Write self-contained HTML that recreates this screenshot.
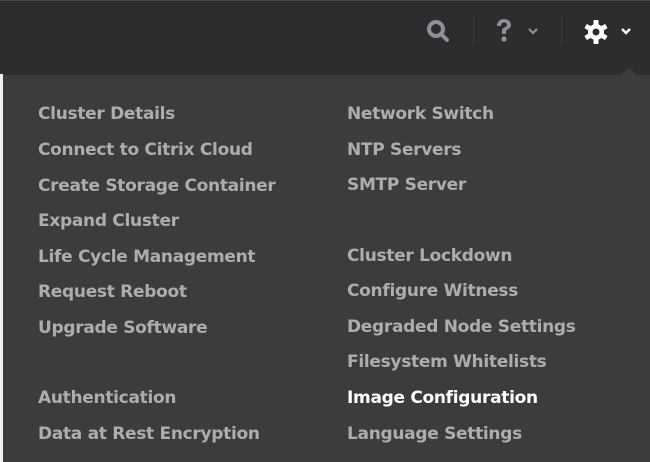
<!DOCTYPE html>
<html><head><style>
body{margin:0;width:650px;height:462px;overflow:hidden;background:#3c3c3f;font-family:"DejaVu Sans","Liberation Sans",sans-serif;position:relative}
.hdr{position:absolute;left:0;top:0;width:650px;height:74px;background:#2d2d30;border-top:1px solid #444}
.lstrip{position:absolute;left:0;top:74px;width:3px;height:388px;background:#f0f0f0}
.it{position:absolute;font-size:17px;font-weight:bold;color:#adadad;white-space:nowrap;letter-spacing:-0.3px;line-height:20px}
.sel{color:#fff}
.sep{position:absolute;top:15px;width:1px;height:29px;background:#3a3a3d}
</style></head><body>
<div class="hdr">
<svg style="position:absolute;left:426px;top:17px" width="26" height="26" viewBox="0 0 26 26"><circle cx="10" cy="11" r="7" fill="none" stroke="#8a9298" stroke-width="4"/><line x1="15" y1="16" x2="21" y2="22" stroke="#8a9298" stroke-width="4" stroke-linecap="round"/></svg>
<div class="sep" style="left:473px"></div>
<svg style="position:absolute;left:494px;top:17px" width="20" height="26" viewBox="0 0 20 26"><path d="M3,8 C3,3 7,1 10,1 C14,1 17,3.5 17,7 C17,10.5 13,11.5 12,13 L12,16 L8,16 L8,12 C8,9.5 13,9 13,7 C13,5.5 12,4.5 10,4.5 C8,4.5 7,6 7,8 Z" fill="#8a9298"/><circle cx="10" cy="21" r="2.6" fill="#8a9298"/></svg>
<svg style="position:absolute;left:527px;top:26px" width="12" height="8" viewBox="0 0 12 8"><polyline points="2,2 6,6 10,2" fill="none" stroke="#8a9298" stroke-width="2.2"/></svg>
<div class="sep" style="left:561px"></div>
<svg style="position:absolute;left:583px;top:18px" width="26" height="26" viewBox="-13 -13 26 26"><g fill="#fff"><circle r="8"/><rect x="-2.5" y="-12" width="5" height="24" rx="1"/><rect x="-2.5" y="-12" width="5" height="24" rx="1" transform="rotate(60)"/><rect x="-2.5" y="-12" width="5" height="24" rx="1" transform="rotate(120)"/></g><circle r="3.5" fill="#2d2d30"/></svg>
<svg style="position:absolute;left:620px;top:26px" width="12" height="8" viewBox="0 0 12 8"><polyline points="2,2 6,6 10,2" fill="none" stroke="#fff" stroke-width="2.4"/></svg>
<div style="position:absolute;left:621px;top:66px;width:0;height:0;border-left:8px solid transparent;border-right:8px solid transparent;border-bottom:8px solid #3c3c3f"></div>
</div>
<div class="lstrip"></div>
<div class="it" style="left:38px;top:104px">Cluster Details</div>
<div class="it" style="left:38px;top:140px">Connect to Citrix Cloud</div>
<div class="it" style="left:38px;top:176px">Create Storage Container</div>
<div class="it" style="left:38px;top:211px">Expand Cluster</div>
<div class="it" style="left:38px;top:247px">Life Cycle Management</div>
<div class="it" style="left:38px;top:282px">Request Reboot</div>
<div class="it" style="left:38px;top:318px">Upgrade Software</div>
<div class="it" style="left:38px;top:388px">Authentication</div>
<div class="it" style="left:38px;top:424px">Data at Rest Encryption</div>
<div class="it" style="left:347px;top:104px">Network Switch</div>
<div class="it" style="left:347px;top:140px">NTP Servers</div>
<div class="it" style="left:347px;top:175px">SMTP Server</div>
<div class="it" style="left:347px;top:246px">Cluster Lockdown</div>
<div class="it" style="left:347px;top:281px">Configure Witness</div>
<div class="it" style="left:347px;top:317px">Degraded Node Settings</div>
<div class="it" style="left:347px;top:352px">Filesystem Whitelists</div>
<div class="it sel" style="left:347px;top:388px">Image Configuration</div>
<div class="it" style="left:347px;top:424px">Language Settings</div>
</body></html>
